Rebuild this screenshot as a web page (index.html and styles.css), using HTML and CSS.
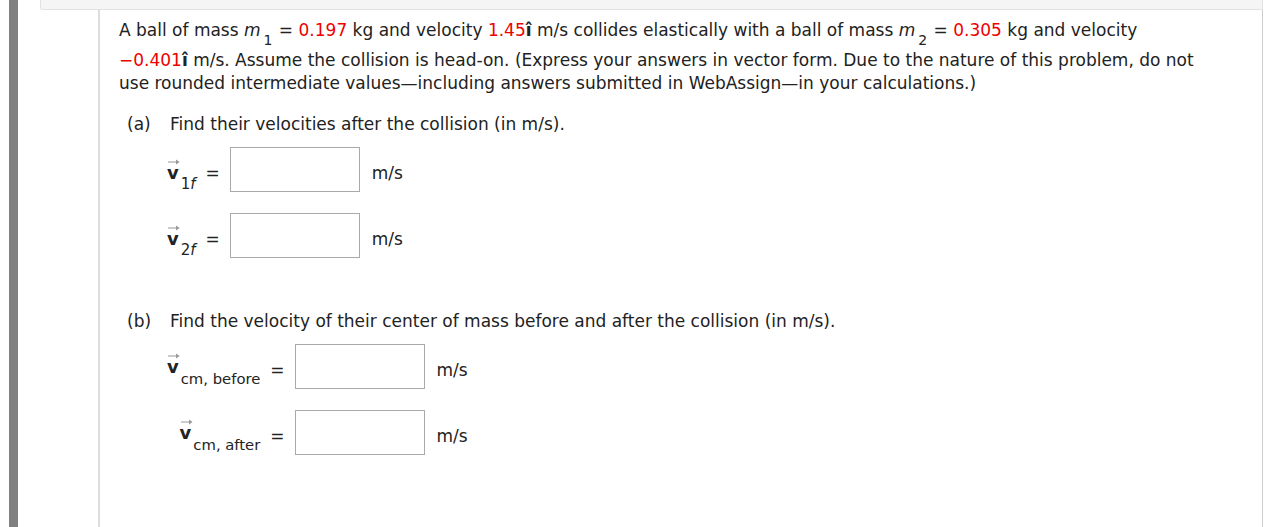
FILE: index.html
```html
<!DOCTYPE html>
<html>
<head>
<meta charset="utf-8">
<title>Elastic collision</title>
<link rel="stylesheet" href="styles.css">
</head>
<body>
<div class="page">
  <div class="sidebar"></div>
  <div class="main">
    <div class="topstrip"></div>
    <div class="content">
      <p class="prompt">A ball of mass <span class="var">m</span><sub class="msub">1</sub> = <span class="val">0.197</span> kg and velocity <span class="val">1.45</span><b>î</b> m/s collides elastically with a ball of mass <span class="var">m</span><sub class="msub">2</sub> = <span class="val">0.305</span> kg and velocity<br><span class="val">−0.401</span><b>î</b> m/s. Assume the collision is head-on. (Express your answers in vector form. Due to the nature of this problem, do not<br>use rounded intermediate values—including answers submitted in WebAssign—in your calculations.)</p>

      <section class="part part-a">
        <div class="part-head"><span class="part-label">(a)</span><span>Find their velocities after the collision (in m/s).</span></div>
        <div class="answers">
          <div class="lbl"><span class="vec">v<svg class="arrow" width="12" height="6" viewBox="0 0 12 6"><line x1="0" y1="3" x2="9" y2="3"/><polygon points="8,0.5 11.5,3 8,5.5"/></svg></span><sub class="asub">1<i>f</i></sub></div>
          <div class="eq">=</div>
          <input class="ans" type="text">
          <div class="unit">m/s</div>

          <div class="lbl"><span class="vec">v<svg class="arrow" width="12" height="6" viewBox="0 0 12 6"><line x1="0" y1="3" x2="9" y2="3"/><polygon points="8,0.5 11.5,3 8,5.5"/></svg></span><sub class="asub">2<i>f</i></sub></div>
          <div class="eq">=</div>
          <input class="ans" type="text">
          <div class="unit">m/s</div>
        </div>
      </section>

      <section class="part part-b">
        <div class="part-head"><span class="part-label">(b)</span><span>Find the velocity of their center of mass before and after the collision (in m/s).</span></div>
        <div class="answers">
          <div class="lbl"><span class="vec">v<svg class="arrow" width="12" height="6" viewBox="0 0 12 6"><line x1="0" y1="3" x2="9" y2="3"/><polygon points="8,0.5 11.5,3 8,5.5"/></svg></span><sub class="bsub">cm, before</sub></div>
          <div class="eq">=</div>
          <input class="ans" type="text">
          <div class="unit">m/s</div>

          <div class="lbl"><span class="vec">v<svg class="arrow" width="12" height="6" viewBox="0 0 12 6"><line x1="0" y1="3" x2="9" y2="3"/><polygon points="8,0.5 11.5,3 8,5.5"/></svg></span><sub class="bsub">cm, after</sub></div>
          <div class="eq">=</div>
          <input class="ans" type="text">
          <div class="unit">m/s</div>
        </div>
      </section>
    </div>
  </div>
</div>
</body>
</html>
```
FILE: styles.css
```css
* { box-sizing: border-box; }
html, body { margin: 0; padding: 0; background: #fff; }
body {
  font-family: "DejaVu Sans", Verdana, sans-serif;
  font-size: 17px;
  line-height: 23px;
  color: #222;
}
.page { display: flex; height: 527px; overflow: hidden; }
.sidebar { flex: 0 0 9px; margin-left: 9px; background: #808080; }
.main { flex: 0 0 1223px; margin-left: 22px; display: flex; flex-direction: column; }
.topstrip {
  height: 10px;
  background: #f5f5f5;
  border: 1px solid #e2e2e2;
  border-top: none;
  border-bottom-left-radius: 3px;
}
.content {
  flex: 1;
  margin-left: 58px;
  border-left: 2px solid #ddd;
  border-right: 1px solid #ccc;
  padding: 9px 0 0 19px;
}
.prompt { margin: 0; white-space: nowrap; }
.var { font-style: italic; }
.val { color: #e00; }
.msub {
  font-size: 14px;
  line-height: 17px;
  vertical-align: -9px;
  margin: 0 1px 0 3px;
}
.part-head { display: flex; padding-left: 8px; margin-top: 18px; }
.part-label { width: 43px; flex: 0 0 43px; }
.part-b { margin-top: 52px; }
.part-b .part-head { margin-top: 0; }
.answers {
  display: grid;
  grid-template-columns: auto auto 130px auto;
  justify-content: start;
  align-items: center;
  column-gap: 10px;
  row-gap: 21px;
  margin: 11px 0 0 48px;
}
.lbl { justify-self: end; white-space: nowrap; }
.part-a .lbl { padding-top: 6px; }
.eq, .unit { padding-top: 7px; }
.unit { margin-left: 2px; }
.vec { position: relative; display: inline-block; font-weight: bold; font-size: 18px; }
.arrow { position: absolute; left: 1px; top: -2px; }
.arrow line { stroke: #999; stroke-width: 1; }
.arrow polygon { fill: #999; }
.asub { font-size: 15px; line-height: 0; vertical-align: -10px; margin-left: 2px; }
.bsub { font-size: 14.8px; line-height: 0; vertical-align: -11px; margin-left: 2px; }
.ans {
  width: 130px;
  height: 45px;
  margin: 0;
  padding: 0 4px;
  border: 1px solid #aaa;
  background: #fff;
  font: inherit;
}
```
